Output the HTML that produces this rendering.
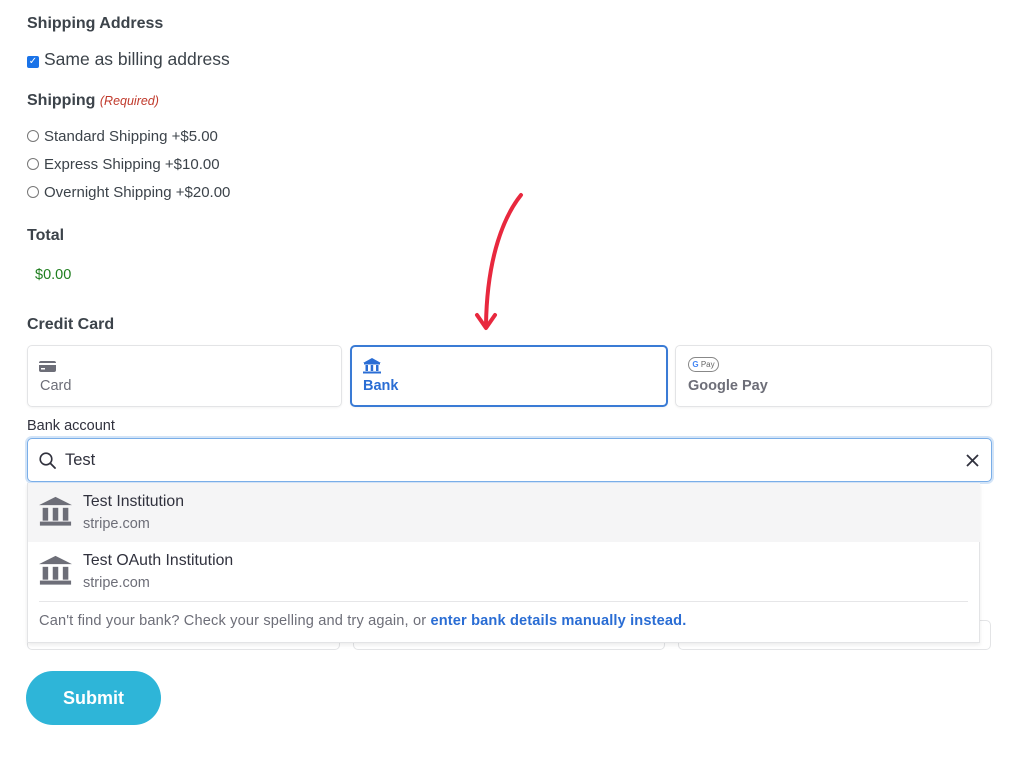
<!DOCTYPE html>
<html><head><meta charset="utf-8"><style>
*{box-sizing:border-box;margin:0;padding:0}
body{width:1024px;height:765px;background:#fff;font-family:"Liberation Sans",sans-serif;color:#3c434a;position:relative;overflow:hidden}
.a{position:absolute;white-space:nowrap}
.h{font-weight:bold;font-size:16px;color:#3c434a}
.r{font-size:15px;color:#3c434a}
.rad{display:inline-block;width:12px;height:12px;border:1px solid #777;border-radius:50%;vertical-align:-1px;margin-right:5px}
.tab{position:absolute;top:345px;height:62px;border:1px solid #e3e4e6;border-radius:5px;box-shadow:0 1px 2px rgba(0,0,0,.05)}
.tab span{position:absolute;left:12px;top:32px;font-size:14.5px;color:#6d6e78;font-weight:bold}
.ghost{position:absolute;top:620px;height:30px;border:1px solid #e3e4e6;border-radius:5px}
</style></head><body>
<div class="a h" style="left:27px;top:15px">Shipping Address</div>
<div class="a" style="left:27px;top:49px;font-size:17.5px"><span style="display:inline-block;width:12px;height:12px;background:#1a73e8;border-radius:2px;vertical-align:1px;margin-right:5px;color:#fff;font-size:10px;line-height:12px;text-align:center">✓</span>Same as billing address</div>
<div class="a h" style="left:27px;top:92px">Shipping <span style="font-weight:normal;font-style:italic;font-size:12.5px;color:#c0392b">(Required)</span></div>
<div class="a r" style="left:27px;top:128px"><span class="rad"></span>Standard Shipping +$5.00</div>
<div class="a r" style="left:27px;top:156px"><span class="rad"></span>Express Shipping +$10.00</div>
<div class="a r" style="left:27px;top:184px"><span class="rad"></span>Overnight Shipping +$20.00</div>
<div class="a h" style="left:27px;top:227px">Total</div>
<div class="a" style="left:35px;top:267px;font-size:14.5px;color:#1e7e1e">$0.00</div>
<div class="a h" style="left:27px;top:316px">Credit Card</div>

<div class="ghost" style="left:27px;width:313px"></div>
<div class="ghost" style="left:353px;width:312px"></div>
<div class="ghost" style="left:678px;width:313px"></div>

<div class="tab" style="left:27px;width:315px">
<svg style="position:absolute;left:11px;top:14px" width="17" height="13" viewBox="0 0 17 13"><rect x="0" y="1" width="17" height="11" rx="2" fill="#6d6e78"/><rect x="0" y="3" width="17" height="2" fill="#fff"/><rect x="2" y="8" width="4" height="1.5" fill="#fff"/></svg>
<span style="font-weight:normal">Card</span></div>
<div class="tab" style="left:350px;width:318px;border:2px solid #3a7bd5">
<svg style="position:absolute;left:11px;top:11px" width="18" height="16" viewBox="0 0 18 16"><path d="M9 0L0 5h18z" fill="#2a6dd4"/><rect x="1" y="5" width="16" height="1.5" fill="#2a6dd4"/><rect x="2.5" y="7" width="2.5" height="6" fill="#2a6dd4"/><rect x="7.7" y="7" width="2.5" height="6" fill="#2a6dd4"/><rect x="13" y="7" width="2.5" height="6" fill="#2a6dd4"/><rect x="0" y="13.5" width="18" height="2" fill="#2a6dd4"/></svg>
<span style="color:#2a6dd4;left:11px;top:31px">Bank</span></div>
<div class="tab" style="left:675px;width:317px">
<div style="position:absolute;left:12px;top:11px;width:31px;height:15px;border:1px solid #888;border-radius:8px;font-size:8px;line-height:13px;text-align:center;color:#666"><b style="color:#4285f4">G</b> Pay</div>
<span>Google Pay</span></div>

<div class="a" style="left:27px;top:418px;font-size:14.5px;color:#30313d">Bank account</div>
<div class="a" style="left:27px;top:438px;width:965px;height:44px;border:1px solid #7aaee8;border-radius:5px;box-shadow:0 0 0 2px #d3e4f7;background:#fff">
<svg style="position:absolute;left:11px;top:13px" width="17" height="17" viewBox="0 0 17 17"><circle cx="7" cy="7" r="5.8" fill="none" stroke="#30313d" stroke-width="1.6"/><path d="M11.3 11.3L16 16" stroke="#30313d" stroke-width="1.8" stroke-linecap="round"/></svg>
<span style="position:absolute;left:37px;top:12px;font-size:16.5px;color:#30313d">Test</span>
<svg style="position:absolute;right:12px;top:15px" width="13" height="13" viewBox="0 0 13 13"><path d="M1 1L12 12M12 1L1 12" stroke="#30313d" stroke-width="1.8"/></svg>
</div>
<div class="a" style="left:27px;top:483px;width:953px;height:160px;background:#fff;border:1px solid #e3e4e6;border-top:none;box-shadow:0 2px 4px rgba(0,0,0,.08)">
<div style="position:absolute;left:0;top:0;width:952px;height:59px;background:#f5f5f6"></div>
<svg style="position:absolute;left:11px;top:12px" width="33" height="33" viewBox="0 0 18 16"><path d="M9 0L0 4.5h18z" fill="#6d6e78"/><rect x="2" y="6" width="3" height="7" fill="#6d6e78"/><rect x="7.5" y="6" width="3" height="7" fill="#6d6e78"/><rect x="13" y="6" width="3" height="7" fill="#6d6e78"/><rect x="0.5" y="13.5" width="17" height="2.2" fill="#6d6e78"/></svg>
<div style="position:absolute;left:55px;top:10px;font-size:15.8px;color:#30313d">Test Institution</div>
<div style="position:absolute;left:55px;top:33px;font-size:14.5px;color:#6d6e78">stripe.com</div>
<svg style="position:absolute;left:11px;top:71px" width="33" height="33" viewBox="0 0 18 16"><path d="M9 0L0 4.5h18z" fill="#6d6e78"/><rect x="2" y="6" width="3" height="7" fill="#6d6e78"/><rect x="7.5" y="6" width="3" height="7" fill="#6d6e78"/><rect x="13" y="6" width="3" height="7" fill="#6d6e78"/><rect x="0.5" y="13.5" width="17" height="2.2" fill="#6d6e78"/></svg>
<div style="position:absolute;left:55px;top:69px;font-size:15.8px;color:#30313d">Test OAuth Institution</div>
<div style="position:absolute;left:55px;top:92px;font-size:14.5px;color:#6d6e78">stripe.com</div>
<div style="position:absolute;left:11px;right:11px;top:118px;border-top:1px solid #e6e6e8"></div>
<div style="position:absolute;left:11px;top:130px;font-size:14.6px;color:#6d6e78;letter-spacing:0.15px">Can't find your bank? Check your spelling and try again, or <b style="color:#2a6dd4">enter bank details manually instead.</b></div>
</div>

<div class="a" style="left:26px;top:671px;width:135px;height:54px;border-radius:27px;background:#2eb5d8;color:#fff;font-weight:bold;font-size:18px;text-align:center;line-height:54px">Submit</div>

<svg class="a" style="left:460px;top:185px" width="80" height="155" viewBox="0 0 80 155"><path d="M61 10C45 30 27 70 26 140" fill="none" stroke="#e8283e" stroke-width="4" stroke-linecap="round"/><path d="M17 130L26 143L35 130" fill="none" stroke="#e8283e" stroke-width="4" stroke-linecap="round" stroke-linejoin="round"/></svg>
</body></html>
